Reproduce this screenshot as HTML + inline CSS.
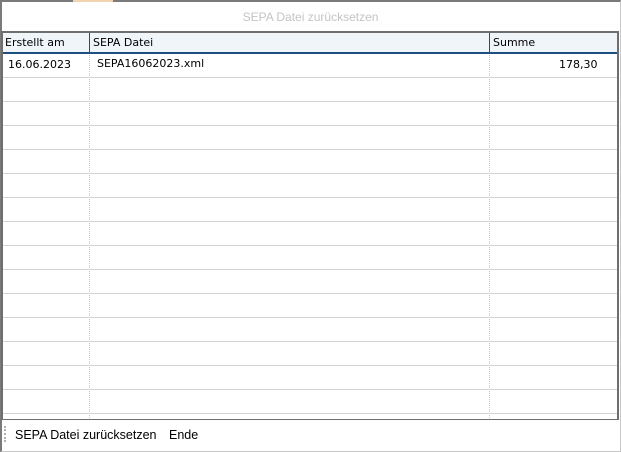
<!DOCTYPE html>
<html><head><style>
*{margin:0;padding:0;box-sizing:border-box}
body{width:621px;height:452px;background:#fff;position:relative;overflow:hidden;font-family:"DejaVu Sans","Liberation Sans",sans-serif;font-size:11px;color:#000}
.abs{position:absolute}
</style></head><body>
<div class="abs" style="left:0;top:0;width:621px;height:452px;border:1px solid #c8c8c8;border-top:2px solid #7a7a7a;border-left:2px solid #7a7a7a"></div>
<div class="abs" style="left:73px;top:0;width:40px;height:2px;background:#f3d3b0"></div>
<div class="abs" style="left:0;top:10px;width:621px;text-align:center;color:#c4c4c4;font-family:'Liberation Sans',sans-serif;font-size:12px">SEPA Datei zurücksetzen</div>
<div class="abs" style="left:1px;top:31px;width:618px;height:389px;border:1px solid #6e6e6e;border-top:2px solid #6e6e6e;border-left:2px solid #6e6e6e;border-right:2px solid #6e6e6e"></div>
<div class="abs" style="left:3px;top:33px;width:614px;height:21px;background:#f0f5fa;border-bottom:2px solid #1f4f80"></div>
<div class="abs" style="left:89px;top:33px;width:1px;height:20px;background:#1f4f80"></div>
<div class="abs" style="left:489px;top:33px;width:1px;height:20px;background:#1f4f80"></div>
<div class="abs" style="left:5px;top:36px">Erstellt am</div>
<div class="abs" style="left:93px;top:36px">SEPA Datei</div>
<div class="abs" style="left:493px;top:36px">Summe</div>
<div class="abs" style="left:89px;top:55px;height:363px;border-left:1px dotted #c8c8c8"></div>
<div class="abs" style="left:489px;top:55px;height:363px;border-left:1px dotted #c8c8c8"></div>
<div id="rows"></div>
<div class="abs" style="left:8px;top:58px">16.06.2023</div>
<div class="abs" style="left:97px;top:57px">SEPA16062023.xml</div>
<div class="abs" style="left:559px;top:58px">178,30</div>
<script>
var h='';for(var y=77;y<=413;y+=24)h+='<div class="abs" style="left:3px;top:'+y+'px;width:614px;height:1px;background:#d4d4d4"></div>';
document.getElementById('rows').outerHTML=h;
</script>
<div class="abs" style="left:4px;top:426px;height:16px;border-left:2px dotted #b0b0b0"></div>
<div class="abs" style="left:15px;top:428px;font-family:'Liberation Sans',sans-serif;font-size:12.5px">SEPA Datei zurücksetzen</div>
<div class="abs" style="left:169px;top:428px;font-family:'Liberation Sans',sans-serif;font-size:12.5px">Ende</div>
</body></html>
